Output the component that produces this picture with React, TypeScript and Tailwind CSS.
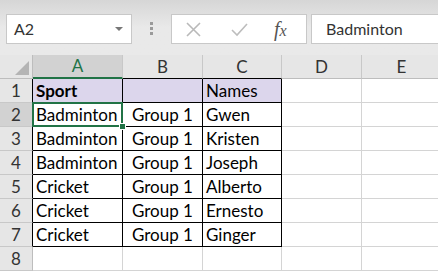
import React from 'react';

const cols = [
  { key: 'A', w: 'w-[90px]' },
  { key: 'B', w: 'w-[80px]' },
  { key: 'C', w: 'w-[79px]' },
  { key: 'D', w: 'w-[80px]' },
  { key: 'E', w: 'w-[80px]' },
];

const rows: (string | null)[][] = [
  ['Sport', '', 'Names'],
  ['Badminton', 'Group 1', 'Gwen'],
  ['Badminton', 'Group 1', 'Kristen'],
  ['Badminton', 'Group 1', 'Joseph'],
  ['Cricket', 'Group 1', 'Alberto'],
  ['Cricket', 'Group 1', 'Ernesto'],
  ['Cricket', 'Group 1', 'Ginger'],
  [null, null, null],
];

export default function App() {
  return (
    <div className="h-[275px] w-[438px] overflow-hidden bg-white text-[17px] text-black" style={{ fontFamily: 'Lato, "Open Sans", sans-serif' }}>
      {/* formula bar */}
      <div className="flex h-[55px] items-center bg-gradient-to-b from-[#d6d6d6] via-[#e9e9e9] to-[#e9e9e9] pl-[6px] pt-[2px]">
        <div className="flex h-[30px] w-[126px] items-center justify-between border border-[#c8c8c8] bg-white pl-[7px] pr-[8px]">
          <span className="text-[16px] text-[#333]">A2</span>
          <span className="h-0 w-0 border-x-[4px] border-t-[4px] border-x-transparent border-t-[#777]" />
        </div>
        <div className="flex w-[39px] flex-col items-center gap-[2px]">
          <span className="h-[3px] w-[3px] bg-[#9a9a9a]" />
          <span className="h-[3px] w-[3px] bg-[#9a9a9a]" />
          <span className="h-[3px] w-[3px] bg-[#9a9a9a]" />
        </div>
        <div className="flex h-[30px] w-[136px] items-center border border-[#c8c8c8] bg-white">
          <svg width="46" height="20" viewBox="0 0 46 20">
            <path d="M15 4 L28 17 M28 4 L15 17" stroke="#b9b9b9" strokeWidth="1.6" fill="none" />
          </svg>
          <svg width="46" height="20" viewBox="0 0 46 20">
            <path d="M14 11 L19 16 L29 5" stroke="#bdbdbd" strokeWidth="1.6" fill="none" />
          </svg>
          <span className="ml-[10px] text-[20px] italic text-[#555]" style={{ fontFamily: '"Liberation Serif", serif' }}>f<span className="text-[16px]">x</span></span>
        </div>
        <div className="ml-[4px] flex h-[30px] flex-1 items-center border border-r-0 border-[#c8c8c8] bg-white pl-[14px]">
          <span className="text-[16px] text-[#333]">Badminton</span>
        </div>
      </div>

      {/* header row */}
      <div className="flex h-[24px] bg-[#e6e6e6]">
        <div className="relative w-[33px] shrink-0 border-r border-b border-[#bdbdbd]">
          <span className="absolute bottom-[3px] right-[3px] h-0 w-0 border-b-[14px] border-l-[14px] border-b-[#b4b4b4] border-l-transparent" />
        </div>
        {cols.map((c, i) => (
          <div
            key={c.key}
            className={`flex shrink-0 items-center justify-center ${c.w} border-r border-[#c8c8c8] ${
              i === 0 ? 'border-b-2 border-b-[#217346] bg-[#d2d2d2] text-[#217346]' : i < 3 ? 'border-b border-b-black text-[#333]' : 'border-b border-b-[#bdbdbd] text-[#333]'
            }`}
          >
            {c.key}
          </div>
        ))}
        <div className="flex-1 border-b border-[#bdbdbd]" />
      </div>

      {/* data rows */}
      {rows.map((r, ri) => {
        const inRange = ri < 7;
        return (
          <div key={ri} className="flex h-[24px]">
            <div
              className={`flex w-[33px] shrink-0 items-center justify-center border-b border-[#c8c8c8] text-[#333] ${
                ri === 1 ? 'bg-[#d2d2d2]' : 'bg-[#e6e6e6]'
              } ${inRange ? 'border-r border-r-black' : 'border-r border-r-[#bdbdbd]'}`}
            >
              {ri + 1}
            </div>
            {cols.map((c, ci) => {
              const val = ci < 3 ? r[ci] : null;
              const black = inRange && ci < 3;
              return (
                <div
                  key={c.key}
                  className={`relative flex shrink-0 items-center ${c.w} whitespace-nowrap border-r border-b ${
                    ri === 0 && ci < 3 ? 'bg-[#dcd6ec]' : 'bg-white'
                  } ${black ? 'border-black' : 'border-[#d4d4d4]'} ${
                    ci === 1 && ri > 0 ? 'justify-center' : 'pl-[3px]'
                  } ${ri === 0 && ci === 0 ? 'font-bold' : ''}`}
                >
                  {val}
                  {ri === 1 && ci === 0 && (
                    <>
                      <span className="pointer-events-none absolute inset-[-1px] z-10 border-2 border-[#217346]" />
                      <span className="absolute bottom-[-4px] right-[-4px] z-20 h-[7px] w-[7px] border border-white bg-[#217346]" />
                    </>
                  )}
                </div>
              );
            })}
            <div className="flex-1 border-b border-[#d4d4d4]" />
          </div>
        );
      })}
    </div>
  );
}
